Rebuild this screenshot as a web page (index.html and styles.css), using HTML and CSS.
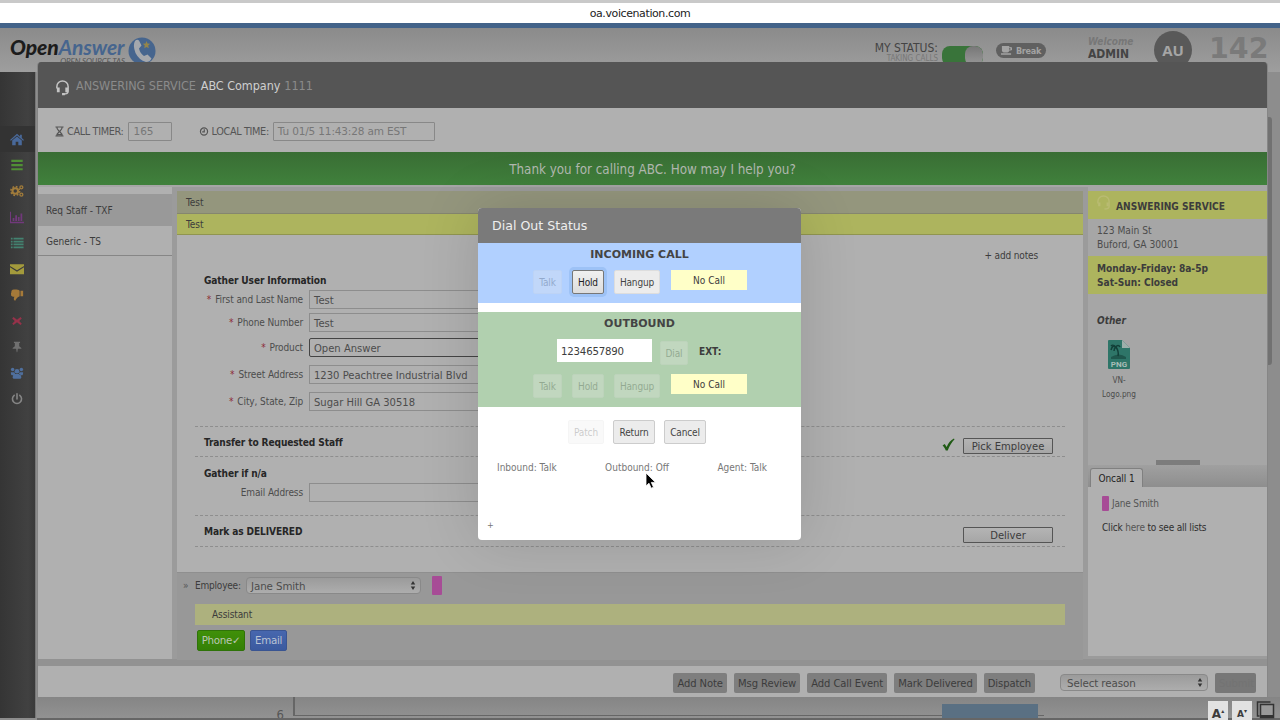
FILE: index.html
```
<!DOCTYPE html>
<html lang="en">
<head>
    <meta charset="UTF-8">
    <meta name="viewport" content="width=device-width, initial-scale=1.0">
    <title>OpenAnswer</title>
    <link rel="stylesheet" href="styles.css">
</head>
<body>
    <div class="address-bar">oa.voicenation.com</div>

    <header class="header">
        <div class="logo">
            <div class="logo-text">
                <div class="logo-name">Open<span>Answer</span></div>
                <div class="logo-tag">OPEN SOURCE TAS</div>
            </div>
            <svg class="logo-icon" viewBox="0 0 28 28">
                <circle cx="14" cy="14" r="13.5" fill="#46658e"/>
                <path d="M7 4Q9 2 11 3.500L13.500 8.500L11 11.500Q12 16 16 19L19.500 17.500L23.500 21.500Q22 25 18 25Q11 23 7.500 16Q4.500 8 7 4Z" fill="#a5a8ad"/>
                <path d="M18.500 4l1 2.500 2.700.3-2 1.800.6 2.700-2.300-1.400-2.300 1.400.6-2.700-2-1.800 2.700-.3z" fill="#94854a"/>
            </svg>
        </div>
        <div class="status">
            <div>MY STATUS:</div>
            <div class="status-sub">TAKING CALLS</div>
        </div>
        <div class="toggle"><span></span></div>
        <div class="break">
            <svg viewBox="0 0 12 10"><path d="M1 0h8v1h1.500a1.500 1.500 0 0 1 0 4H9c0 1-1 2-2 2H3C2 7 1 6 1 5zM9 2v2h1.200V2zM0 8h11v1.500H0z" fill="#a3a3a3"/></svg>
            Break
        </div>
        <div class="welcome"><i>Welcome</i><b>ADMIN</b></div>
        <div class="avatar">AU</div>
        <div class="count">142</div>
    </header>

    <nav class="sidebar">
        <a class="active"><svg viewBox="0 0 16 16"><path d="M8 2L0 9l1 1 7-6 7 6 1-1-2.500-2.200V3h-2v2zM8 5L2.500 9.700V15h4v-4h3v4h4V9.700z" fill="#49699a"/></svg></a>
        <a><svg viewBox="0 0 16 16"><path d="M1.500 2h13v2.500h-13zM1.500 6.800h13v2.500h-13zM1.500 11.600h13v2.500h-13z" fill="#509035"/></svg></a>
        <a><svg viewBox="0 0 16 16" fill="none" stroke="#a07b3b"><circle cx="6" cy="8" r="3.200" stroke-width="2.400"/><circle cx="6" cy="8" r="5" stroke-width="1.800" stroke-dasharray="2 1.930"/><circle cx="13" cy="3.800" r="1.700" stroke-width="1.500"/><circle cx="13" cy="12.200" r="1.700" stroke-width="1.500"/></svg></a>
        <a><svg viewBox="0 0 16 16"><path d="M0 2h1.200v11.500H16V15H0zM3 9h2v3.500H3zM6 6h2v6.500H6zM9 8h2v4.500H9zM12 4h2v8.500h-2z" fill="#71397b"/></svg></a>
        <a><svg viewBox="0 0 16 16"><path d="M1 2h2v2H1zM1 5.300h2v2H1zM1 8.700h2v2H1zM1 12h2v2H1zM4 2H15.500v2H4zM4 5.300H15.500v2H4zM4 8.700H15.500v2H4zM4 12H15.500v2H4z" fill="#438270"/></svg></a>
        <a><svg viewBox="0 0 16 16"><path d="M0 2.500h16v2L8 9.500 0 4.500zM0 6l8 5 8-5v8H0z" fill="#a39a3c"/></svg></a>
        <a><svg viewBox="0 0 16 16"><path d="M1 3h3v6.500H1zM5 3c2-1.500 5-1.500 8-1 2 1 1 2 1.500 3 .8 1 0 2 .3 3C15 9.500 13 10 11 10c1 2 1 4-1 4.500C9 13 8.500 11 5 9.500z" transform="matrix(-1 0 0 1 16 0)" fill="#a67a39"/></svg></a>
        <a><svg viewBox="0 0 16 16"><path d="M4 3.500l4 3 4-3 1.500 1.500-3 3 3 3-1.500 1.500-4-3-4 3L2.500 11l3-3-3-3z" fill="#96324a"/></svg></a>
        <a><svg viewBox="0 0 16 16"><path d="M4.500 2h7v1.500h-1V7L13 9v1H9l-.7 4h-.6L7 10H3V9l2.500-2V3.500h-1z" fill="#707070"/></svg></a>
        <a><svg viewBox="0 0 16 16" fill="#4f6f9d"><circle cx="3" cy="4" r="2"/><circle cx="13" cy="4" r="2"/><circle cx="8" cy="6" r="2.700"/><path d="M1 7h4l1 2-2 1.500H2C1 10 1 8 1 7zM15 7h-4l-1 2 2 1.500h2c1-.5 1-2.500 1-3.500zM5 9h6c1.500 1 2 3 2 4.500l-1 1H4l-1-1C3 12 3.500 10 5 9z"/></svg></a>
        <a><svg viewBox="0 0 16 16" fill="none" stroke="#858585" stroke-width="1.800" stroke-linecap="round"><path d="M8 2v6M4.800 3.800a5.200 5.200 0 1 0 6.400 0"/></svg></a>
    </nav>

    <div class="chart">
        <span class="chart-label">6</span>
        <div class="chart-plot"><div class="chart-bar"></div></div>
    </div>

    <div class="scroll-thumb"></div>

    <main class="window">
        <div class="window-title">
            <svg viewBox="0 0 16 18" fill="none" stroke="#c4c4c4"><path d="M2 10V8a6 6 0 0 1 12 0v5c0 2-2 3-5 3" stroke-width="1.600"/><path d="M3.500 9v5M12.500 9v5" stroke-width="3"/><path d="M7.500 16h3" stroke-width="2.400"/></svg>
            ANSWERING SERVICE <span>ABC Company</span> 1111
        </div>

        <div class="timers">
            <svg viewBox="0 0 10 12" fill="none" stroke="#555" stroke-width="1.300"><path d="M.5 1h9M.5 11h9M2 1c0 3 2 4 3 5-1 1-3 2-3 5M8 1c0 3-2 4-3 5 1 1 3 2 3 5M3 9.500h4"/></svg>
            <span class="timer-label">CALL TIMER:</span>
            <span class="timer-value">165</span>
            <svg class="clock" viewBox="0 0 10 12" fill="none" stroke="#555" stroke-width="1.300"><circle cx="5" cy="6" r="3.900"/><path d="M5.300 3.500V6.500H3"/></svg>
            <span class="timer-label">LOCAL TIME:</span>
            <span class="timer-value timer-wide">Tu 01/5 11:43:28 am EST</span>
        </div>

        <div class="greeting">Thank you for calling ABC. How may I help you?</div>

        <div class="content">
            <div class="scripts">
                <div class="script selected">Req Staff - TXF</div>
                <div class="script">Generic - TS</div>
            </div>

            <section class="work">
                <div class="test-row">Test</div>
                <div class="test-row bright">Test</div>
                <div class="form">
                    <div class="gather">
                        <div class="add-notes">+ add notes</div>
                        <h3>Gather User Information</h3>
                        <div class="field"><label><i>*</i> First and Last Name</label><span class="input">Test</span></div>
                        <div class="field f2"><label><i>*</i> Phone Number</label><span class="input">Test</span></div>
                        <div class="field f3"><label><i>*</i> Product</label><span class="input focus">Open Answer</span></div>
                        <div class="field f4"><label><i>*</i> Street Address</label><span class="input">1230 Peachtree Industrial Blvd</span></div>
                        <div class="field f5"><label><i>*</i> City, State, Zip</label><span class="input">Sugar Hill GA 30518</span></div>
                    </div>
                    <div class="step">
                        <h3>Transfer to Requested Staff</h3>
                        <svg class="check" viewBox="0 0 12 12"><path d="M.5 7L2.500 5.500l1.800 2.700C6 4.500 8 2 11 .5l.6.6C8.800 4 6.800 7.500 5.300 11.500H3.500C2.800 9.800 1.800 8 .5 7z" fill="#1f5a14"/></svg>
                        <span class="plain-btn">Pick Employee</span>
                    </div>
                    <div class="gather-na">
                        <h3>Gather if n/a</h3>
                        <div class="field"><label>Email Address</label><span class="input"></span></div>
                    </div>
                    <div class="step last">
                        <h3>Mark as DELIVERED</h3>
                        <span class="plain-btn">Deliver</span>
                    </div>
                </div>
                <div class="employee">
                    <div class="employee-row">
                        <span class="raquo">»</span>
                        <span class="employee-label">Employee:</span>
                        <span class="select employee-select">Jane Smith<svg viewBox="0 0 6 10"><path d="M3 0l2.500 4h-5zM3 10L.5 6h5z" fill="#333"/></svg></span>
                        <span class="swatch"></span>
                    </div>
                    <div class="assistant">Assistant</div>
                    <div class="contacts"><span class="phone">Phone✓</span><span class="email">Email</span></div>
                </div>
            </section>

            <aside class="info">
                <div class="info-title">
                    <svg viewBox="0 0 16 18" fill="none" stroke="#b9bb72"><path d="M2 10V8a6 6 0 0 1 12 0v5c0 2-2 3-5 3" stroke-width="1.500"/><path d="M3.500 9v4M12.500 9v4" stroke-width="2.500"/></svg>
                    ANSWERING SERVICE
                </div>
                <div class="address">123 Main St<br>Buford, GA 30001</div>
                <div class="hours">Monday-Friday: 8a-5p<br>Sat-Sun: Closed</div>
                <div class="files">
                    <div class="files-title">Other</div>
                    <div class="file">
                        <svg viewBox="0 0 22 29"><path d="M0 1Q0 0 1 0H14L22 8V28Q22 29 21 29H1Q0 29 0 28z" fill="#2e7568"/><path d="M14 0L22 8H14z" fill="#9db0ab"/><path d="M3 17q8-5 15 0v2H3z" fill="#1f564c"/><path d="M10 16C11 12 10 10 8 7M8 7C5 5 4 7 3 10M8 7C6 8 6 9 6 11M8 7C9 5 11 5 12 7M8 7C5 4 4 5 3 6" stroke="#123f38" stroke-width="1.500" fill="none"/><text x="11" y="26.500">PNG</text></svg>
                        VN-<br>Logo.png
                    </div>
                </div>
                <div class="tabs"><span class="tab">Oncall 1</span></div>
                <div class="oncall">
                    <div class="oncall-person"><span></span>Jane Smith</div>
                    <div>Click <a>here</a> to see all lists</div>
                </div>
            </aside>
        </div>

        <footer class="actions">
            <span class="action">Add Note</span>
            <span class="action">Msg Review</span>
            <span class="action">Add Call Event</span>
            <span class="action">Mark Delivered</span>
            <span class="action">Dispatch</span>
            <span class="select reason">Select reason<svg viewBox="0 0 6 10"><path d="M3 0l2.500 4h-5zM3 10L.5 6h5z" fill="#333"/></svg></span>
            <span class="action submit">Submit</span>
        </footer>
    </main>

    <div class="tools">
        <span class="tool">A<sup>▴</sup></span>
        <span class="tool small">A<sup>▾</sup></span>
        <svg viewBox="0 0 18 18"><path d="M14 1H1v14h2" fill="none" stroke="#333" stroke-width="1.500"/><path d="M4 3.500h13v13H4z" fill="#999" stroke="#333" stroke-width="1.500"/><path d="M3.500 14h14v3h-14z" fill="#333"/></svg>
    </div>

    <div class="dialog">
        <div class="dialog-title">Dial Out Status</div>
        <div class="incoming">
            <h4>INCOMING CALL</h4>
            <div class="calls">
                <button class="btn talk" disabled>Talk</button>
                <button class="btn hold focused">Hold</button>
                <button class="btn hangup">Hangup</button>
                <span class="state">No Call</span>
            </div>
        </div>
        <div class="outbound">
            <h4>OUTBOUND</h4>
            <div class="dial-row">
                <span class="number">1234657890</span>
                <button class="btn dial" disabled>Dial</button>
                <b>EXT:</b>
            </div>
            <div class="calls">
                <button class="btn talk" disabled>Talk</button>
                <button class="btn hold" disabled>Hold</button>
                <button class="btn hangup" disabled>Hangup</button>
                <span class="state">No Call</span>
            </div>
        </div>
        <div class="dialog-buttons">
            <button class="btn patch" disabled>Patch</button>
            <button class="btn bordered">Return</button>
            <button class="btn bordered">Cancel</button>
        </div>
        <div class="dialog-status"><span>Inbound: Talk</span><span>Outbound: Off</span><span>Agent: Talk</span></div>
        <div class="more">+</div>
    </div>

    <svg class="cursor" viewBox="0 0 12 18"><path d="M1 1v13l3-2.800 2.200 5 2.300-1-2.200-4.800H10.500z" fill="#000" stroke="#fff" stroke-width=".8"/></svg>
</body>
</html>
```
FILE: styles.css
```
:root {
    --panel: #b0b0b0;
    --gap: #9b9b9b;
    --yellow: #adb45e;
    --text: #3c3c3c;
    --text-secondary: #4c4c4c;
    --pink: #a74c96;
    --condensed: 'DejaVu Sans Condensed', 'DejaVu Sans', sans-serif;
    --wide: 'DejaVu Sans', sans-serif;
}

* {
    margin: 0;
    padding: 0;
    box-sizing: border-box;
}

body {
    width: 1280px;
    height: 720px;
    overflow: hidden;
    position: relative;
    background: #8d8d8d;
    color: var(--text);
    font: 10px/14px var(--condensed);
    white-space: nowrap;
}

.address-bar {
    height: 28px;
    background: #fff;
    border-top: 3px solid #c9c9c9;
    border-bottom: 5px solid #436389;
    text-align: center;
    font: 11px/21px var(--wide);
    letter-spacing: -0.4px;
    color: #222;
}

/* Header */
.header {
    height: 44px;
    display: flex;
    align-items: flex-start;
    background: linear-gradient(#8b8b8b, #9e9e9e);
}

.header > * {
    flex-shrink: 0;
}

.logo {
    display: flex;
    width: 871px;
    padding: 9px 0 0 10px;
}

.logo-text {
    width: 118px;
}

.logo-name {
    font: italic 900 21px/20px Lato, sans-serif;
    letter-spacing: -0.1px;
    color: #1c1c1c;
}

.logo-name span {
    color: #46658e;
    font-weight: bold;
}

.logo-tag {
    font: italic 8px/8px Lato, sans-serif;
    letter-spacing: -0.1px;
    color: #555;
    text-align: right;
    padding-right: 3px;
}

.logo-icon {
    width: 28px;
    height: 28px;
}

.status {
    width: 71px;
    padding: 13px 4px 0 0;
    text-align: right;
    font: 12px/14px var(--condensed);
    color: #444;
}

.status-sub {
    font-size: 8px;
    line-height: 7px;
    color: #777;
}

.toggle {
    width: 41px;
    height: 20px;
    margin: 18px 13px 0 0;
    border-radius: 8px;
    background: #39743a;
    overflow: hidden;
}

.toggle span {
    display: block;
    width: 18px;
    height: 20px;
    margin-left: 23px;
    border-radius: 8px;
    background: linear-gradient(#777, #999);
}

.break {
    width: 50px;
    height: 15px;
    margin-top: 15px;
    padding-left: 5px;
    border-radius: 8px;
    background: #606060;
    color: #a3a3a3;
    display: flex;
    align-items: center;
    gap: 4px;
    font-weight: bold;
    font-size: 9px;
    letter-spacing: -0.3px;
}

.break svg {
    width: 11px;
}

.welcome {
    margin: 7px 0 0 42px;
    width: 66px;
    font: bold 12px/13px var(--condensed);
    color: #444;
}

.welcome i {
    display: block;
    font-size: 10px;
    color: #777;
}

.avatar {
    width: 38px;
    height: 38px;
    margin-top: 3px;
    border-radius: 50%;
    background: #595959;
    color: #a5a5a5;
    text-align: center;
    font: bold 15px/39px 'Open Sans', sans-serif;
}

.count {
    margin: 4px 0 0 17px;
    font: bold 28.5px/34px var(--wide);
    color: #7a7a7a;
}

/* Sidebar */
.sidebar {
    width: 36px;
    height: 646px;
    padding-top: 54px;
    background: linear-gradient(90deg, #353535, #414141 80%, #3a3a3a);
    border-right: 1px solid #777;
}

.sidebar a {
    display: flex;
    height: 26px;
    align-items: center;
    padding-left: 10px;
}

.sidebar a.active {
    background: #333;
}

.sidebar svg {
    width: 14px;
    height: 14px;
}

/* Chart behind the window */
.chart {
    position: absolute;
    left: 37px;
    top: 697px;
    width: 1243px;
    height: 23px;
    background: linear-gradient(#858585, #929292);
    border-bottom: 2px solid #666;
    overflow: hidden;
    display: flex;
}

.chart-label {
    width: 256px;
    padding: 11px 9px 0 0;
    text-align: right;
    font-size: 13px;
    color: #555;
}

.chart-plot {
    width: 751px;
    height: 19px;
    padding: 7px 6px 0 0;
    border-left: 2px solid #666;
    border-bottom: 1px solid #666;
}

.chart-bar {
    width: 96px;
    height: 14px;
    margin-left: auto;
    background: #5a7083;
}

.scroll-thumb {
    position: absolute;
    left: 1268px;
    top: 117px;
    width: 4px;
    height: 248px;
    border-radius: 0 3px 3px 0;
    background: #717171;
}

/* Call window */
.window {
    position: absolute;
    left: 37px;
    top: 62px;
    width: 1231px;
    height: 635px;
    border: 1px solid #868686;
    border-width: 0 1px;
    border-radius: 4px 4px 0 0;
    background: var(--gap);
    overflow: hidden;
}

.window-title {
    height: 46px;
    background: #555;
    color: #8b8b8b;
    display: flex;
    align-items: center;
    gap: 4px;
    padding: 2px 0 0 17px;
    font-size: 12.5px;
    letter-spacing: -0.05px;
}

.window-title svg {
    width: 15px;
    height: 17px;
    margin: 2px 2px 0 0;
}

.window-title span {
    color: #cfcfcf;
    margin-left: 1px;
}

.timers {
    height: 44px;
    background: var(--panel);
    display: flex;
    align-items: center;
    padding: 3px 0 0 17px;
    color: #555;
}

.timers svg {
    width: 9px;
    height: 11px;
    margin-right: 3px;
}

.timers .clock {
    margin-left: 27px;
    width: 10px;
    margin-right: 2px;
}

.timer-label {
    font-size: 10.8px;
    letter-spacing: -0.35px;
}

.timer-value {
    width: 44px;
    height: 19px;
    margin-left: 5px;
    padding-left: 4px;
    border: 1px solid #888;
    border-radius: 1px;
    font: 10.5px/17px var(--wide);
    color: #777;
}

.timer-wide {
    width: 162px;
    margin-left: 4px;
    letter-spacing: -0.15px;
}

.greeting {
    height: 33px;
    background: linear-gradient(#396d34, #40813c);
    color: #b2b9b0;
    text-align: center;
    font-size: 13.3px;
    line-height: 35px;
}

.content {
    height: 474px;
    display: flex;
    gap: 5px;
    border-top: 2px solid #a6a6a6;
}

.scripts {
    width: 134px;
    background: var(--panel);
    padding-top: 7px;
}

.script {
    height: 30px;
    padding-left: 8px;
    border-bottom: 1px solid #868686;
    line-height: 31px;
    font-size: 10px;
}

.script.selected {
    height: 32px;
    line-height: 34px;
    background: #999;
    border: 0;
}

.work {
    width: 906px;
    padding-top: 4px;
}

.test-row {
    height: 23px;
    padding-left: 9px;
    background: #94967d;
    border-bottom: 1px solid #85866f;
    line-height: 23px;
}

.test-row.bright {
    height: 21px;
    background: var(--yellow);
    border-color: #90954f;
    line-height: 22px;
}

.form {
    height: 337px;
    padding: 0 18px;
    background: var(--panel);
}

h3 {
    font: bold 10.1px/16px var(--condensed);
    height: 14px;
    letter-spacing: -0.12px;
    color: #262626;
}

.gather {
    height: 192px;
    padding: 14px 9px 0;
    border-bottom: 1px dashed #8e8e8e;
}

.add-notes {
    text-align: right;
    padding-right: 18px;
    margin-bottom: 10px;
    font-size: 10px;
    letter-spacing: -0.15px;
}

.field {
    display: flex;
    align-items: center;
    gap: 6px;
    height: 19px;
    margin-top: 3px;
}

.field label {
    width: 99px;
    padding-top: 1px;
    display: flex;
    justify-content: flex-end;
    gap: 4px;
    color: var(--text-secondary);
    font-size: 10px;
    letter-spacing: -0.1px;
}

.field i {
    color: #8d2c36;
    font-style: normal;
}

.field.f2 {
    margin-top: 4px;
}

.field.f3 {
    margin-top: 6px;
}

.field.f4,
.field.f5 {
    margin-top: 8px;
}

.input {
    width: 300px;
    height: 19px;
    padding-left: 4px;
    border: 1px solid #8d8d8d;
    font: 10px/19px var(--wide);
    color: var(--text-secondary);
}

.input.focus {
    border-color: #444;
    border-radius: 2px;
}

.step {
    height: 30px;
    display: flex;
    align-items: center;
    padding: 0 12px 0 9px;
    border-bottom: 1px dashed #8e8e8e;
}

.step.last {
    height: 31px;
}

.step h3 {
    flex: 1;
}

.check {
    width: 13px;
    height: 13px;
    margin: 5px 8px 0 0;
}

.plain-btn {
    width: 90px;
    height: 16px;
    margin-top: 8px;
    border: 1px solid #555;
    border-radius: 1px;
    text-align: center;
    font: 10px/15px var(--wide);
    background: linear-gradient(#b4b4b4, #a6a6a6);
}

.step.last .plain-btn {
    margin-top: 7px;
}

.gather-na {
    height: 59px;
    padding: 9px 9px 0;
    border-bottom: 1px dashed #8e8e8e;
}

.employee {
    height: 88px;
    padding-top: 3px;
    border-top: 1px solid #8f8f8f;
    background: #989898;
}

.employee-row {
    display: flex;
    align-items: center;
    height: 19px;
    padding-left: 6px;
}

.raquo {
    width: 12px;
    color: #555;
}

.employee-label {
    width: 51px;
    font-size: 10px;
    letter-spacing: -0.2px;
}

.select {
    height: 17px;
    padding: 0 4px 0 6px;
    border: 1px solid #898989;
    border-radius: 4px;
    background: linear-gradient(#9b9b9b, #adadad);
    display: flex;
    align-items: center;
    justify-content: space-between;
    font: 10.3px/14px var(--wide);
    letter-spacing: -0.1px;
    color: var(--text-secondary);
}

.select svg {
    width: 6px;
    height: 9px;
}

.employee-select {
    width: 175px;
    padding-left: 4px;
}

.swatch {
    width: 10px;
    height: 19px;
    margin-left: 11px;
    border-radius: 1px;
    background: var(--pink);
}

.assistant {
    height: 21px;
    margin: 9px 18px 5px;
    padding-left: 17px;
    background: #adb17e;
    line-height: 22px;
    font-size: 10px;
    letter-spacing: -0.1px;
}

.contacts {
    display: flex;
    gap: 5px;
    padding-left: 20px;
}

.phone,
.email {
    width: 48px;
    height: 21px;
    border-radius: 2px;
    border: 1px solid #2f7308;
    background: linear-gradient(#409009, #348006);
    color: #bac6b4;
    text-align: center;
    font: 10.3px/19px var(--wide);
    letter-spacing: -0.3px;
}

.email {
    width: 37px;
    border-color: #3a5592;
    background: linear-gradient(#4767ae, #3b5a9f);
    color: #bac3d4;
}

/* Right column */
.info {
    width: 179px;
    height: 469px;
    padding-top: 4px;
    background: #a6a6a6;
    display: flex;
    flex-direction: column;
}

.info-title {
    height: 28px;
    padding: 4px 0 0 8px;
    background: var(--yellow);
    display: flex;
    align-items: center;
    gap: 5px;
    font: bold 10.1px/14px var(--condensed);
}

.info-title svg {
    width: 15px;
    height: 17px;
    margin-top: -10px;
}

.address {
    height: 37px;
    padding: 5px 9px;
    font-size: 10.2px;
    color: var(--text-secondary);
}

.hours {
    height: 38px;
    padding: 6px 9px;
    background: var(--yellow);
    font: bold 10.1px/14px var(--condensed);
}

.files {
    height: 171px;
    padding: 20px 0 0 9px;
}

.files::after {
    content: '';
    display: block;
    width: 44px;
    height: 5px;
    margin: 59px 0 0 59px;
    background: #7c7c7c;
}

.files-title {
    font: italic bold 10px/14px var(--condensed);
}

.file {
    width: 44px;
    margin-top: 12px;
    text-align: center;
    font-size: 8.2px;
    line-height: 14px;
    color: var(--text-secondary);
}

.file svg {
    display: block;
    width: 22px;
    height: 29px;
    margin: 0 auto 4px;
}

.file text {
    font: bold 8px Roboto, sans-serif;
    text-anchor: middle;
    fill: #a8bdb8;
}

.tabs {
    height: 22px;
    padding: 3px 2px 0;
    background: linear-gradient(#a0a0a0, #8e8e8e);
}

.tab {
    display: block;
    width: 53px;
    height: 19px;
    border: 1px solid #808080;
    border-bottom: 0;
    border-radius: 3px 3px 0 0;
    background: var(--panel);
    text-align: center;
    line-height: 20px;
    font-size: 10px;
    letter-spacing: -0.1px;
    color: #222;
}

.oncall {
    flex: 1;
    padding: 9px 14px;
    background: var(--panel);
    font-size: 10px;
    letter-spacing: -0.18px;
    color: #2f2f2f;
}

.oncall-person {
    display: flex;
    align-items: center;
    gap: 3px;
    height: 15px;
    margin-bottom: 10px;
    color: #555;
}

.oncall-person span {
    width: 7px;
    height: 15px;
    border-radius: 1px;
    background: var(--pink);
}

.oncall a {
    color: #555;
}

/* Footer actions */
.actions {
    height: 38px;
    display: flex;
    align-items: center;
    justify-content: flex-end;
    gap: 7px;
    padding: 2px 11px 0 0;
    border-top: 7px solid #929292;
    background: var(--panel);
}

.action {
    height: 20px;
    padding: 0 4px;
    border-radius: 2px;
    background: #7e7e7e;
    font: 10px/21px var(--wide);
    letter-spacing: -0.08px;
}

.reason {
    width: 148px;
    margin-left: 18px;
}

.submit {
    width: 41px;
    background: #777;
    color: #737373;
}

.tools {
    position: absolute;
    left: 1208px;
    top: 701px;
    display: flex;
    gap: 4px;
}

.tool {
    width: 20px;
    height: 19px;
    background: #e2e2e2;
    text-align: center;
    font: bold 12px/20px var(--wide);
}

.tool.small {
    font-size: 9px;
}

.tool sup {
    font-size: 6px;
}

.tools svg {
    width: 19px;
    height: 18px;
}

/* Dialog */
.dialog {
    position: absolute;
    left: 478px;
    top: 208px;
    width: 323px;
    height: 332px;
    border-radius: 4px;
    background: #fff;
    box-shadow: 0 0 60px rgba(0, 0, 0, 0.14);
    overflow: hidden;
}

.dialog-title {
    height: 35px;
    padding-left: 14px;
    background: #7a7a7a;
    color: #eee;
    font: 12.6px/36px var(--wide);
}

h4 {
    text-align: center;
    font: bold 11px/14px var(--wide);
    color: #444;
}

.incoming {
    height: 60px;
    padding-top: 5px;
    background: #b1d0ff;
}

.calls {
    display: flex;
    align-items: flex-start;
    margin: 8px 0 0 55px;
}

.btn {
    height: 24px;
    padding-top: 1px;
    border: 1px solid #ddd;
    border-radius: 2px;
    background: #ececec;
    color: #444;
    font: 10px/20px var(--condensed);
    letter-spacing: -0.15px;
}

.btn:disabled {
    opacity: 0.27;
}

.talk {
    width: 29px;
    margin-right: 10px;
}

.hold {
    width: 32px;
    margin-right: 10px;
}

.hangup {
    width: 46px;
    margin-right: 11px;
}

.hold.focused {
    border-color: #777;
    background: linear-gradient(#f0f0f0, #ddd);
    box-shadow: 0 0 0 3px #9dc2f6;
    color: #222;
}

.state {
    width: 76px;
    height: 20px;
    background: #ffffc8;
    text-align: center;
    font-size: 10px;
    line-height: 21px;
}

.outbound {
    height: 95px;
    margin-top: 9px;
    padding-top: 5px;
    background: #b1d0af;
}

.dial-row {
    display: flex;
    height: 25px;
    margin: 8px 0 0 79px;
}

.number {
    width: 95px;
    height: 23px;
    padding-left: 4px;
    background: #fff;
    font: 10.2px/25px var(--wide);
    letter-spacing: -0.2px;
}

.dial {
    width: 28px;
    margin: 2px 11px 0 8px;
}

.dial-row b {
    line-height: 25px;
}

.outbound .calls {
    margin-top: 10px;
}

.dialog-buttons {
    display: flex;
    gap: 9px;
    margin: 13px 0 0 90px;
}

.patch {
    width: 36px;
}

.bordered {
    width: 42px;
    border-color: #ccc;
}

.dialog-status {
    display: flex;
    justify-content: space-between;
    padding: 17px 34px 0 19px;
    font-size: 10px;
    color: #777;
}

.more {
    margin: 43px 0 0 9px;
    font-size: 9px;
    color: #777;
}

.cursor {
    position: absolute;
    left: 645px;
    top: 472px;
    width: 12px;
    height: 18px;
}
```
